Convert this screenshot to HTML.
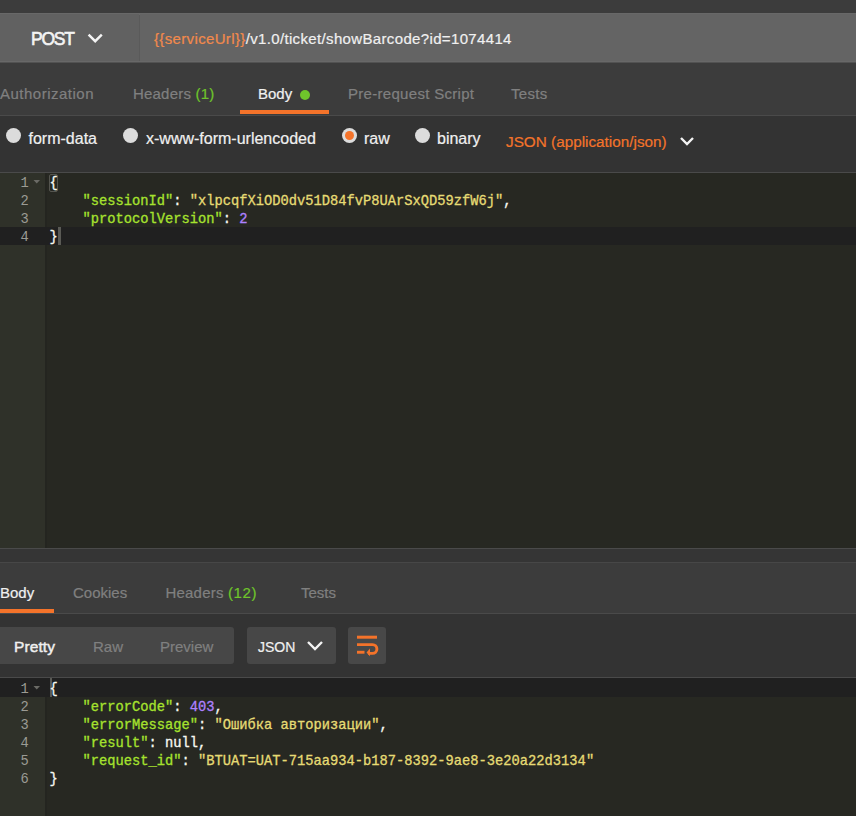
<!DOCTYPE html>
<html><head><meta charset="utf-8">
<style>
html,body{margin:0;padding:0}
body{width:856px;height:816px;overflow:hidden;background:#333333;position:relative;font-family:"Liberation Sans",sans-serif}
.a{position:absolute;white-space:pre}
.t{position:absolute;white-space:pre;line-height:20px;height:20px;-webkit-text-stroke:0.2px currentColor}
.mono{font-family:"Liberation Mono",monospace;font-size:13.75px;line-height:18px;white-space:pre;position:absolute;-webkit-text-stroke:0.3px currentColor}
.k{color:#a6e22e}.s{color:#e6db74}.n{color:#ae81ff}.p{color:#f8f8f2}
.ln{position:absolute;font-family:"Liberation Mono",monospace;font-size:13.75px;line-height:18px;color:#9b9b94;text-align:right;width:28.7px;left:0}
</style></head><body>
<!-- top strip -->
<div class="a" style="left:0;top:0;width:856px;height:13px;background:#3c3c3c"></div>
<!-- request bar -->
<div class="a" style="left:0;top:13px;width:856px;height:49px;background:#686868"></div>
<div class="a" style="left:0;top:14px;width:139px;height:47px;background:#616161"></div>
<div class="a" style="left:140px;top:14px;width:716px;height:47px;background:#646464"></div>
<div class="a" style="left:139px;top:15px;width:1px;height:46px;background:#5a5a5a"></div>
<div class="a" style="left:0;top:62px;width:856px;height:1px;background:#525252"></div>
<div class="t" style="left:31px;top:28.9px;font-size:17.5px;color:#f4f4f4;letter-spacing:-1.25px;-webkit-text-stroke:0.6px #f4f4f4">POST</div>
<svg class="a" style="left:85px;top:30px" width="20" height="16" viewBox="0 0 20 16"><path d="M3.6 4.6 L10.2 11.2 L16.8 4.6" fill="none" stroke="#f4f4f4" stroke-width="2.4"/></svg>
<div class="t" style="left:154px;top:29.1px;font-size:15px;letter-spacing:0.35px;color:#f0f0f0"><span style="color:#f28a4c">{{serviceUrl}}</span>/v1.0/ticket/showBarcode?id=1074414</div>

<!-- tabs row -->
<div class="a" style="left:0;top:63px;width:856px;height:52px;background:#3c3c3c"></div>
<div class="a" style="left:0;top:115px;width:856px;height:1px;background:#4a4a4a"></div>
<div class="t" style="left:0;top:83.9px;font-size:15px;letter-spacing:0.5px;color:#808080">Authorization</div>
<div class="t" style="left:133px;top:83.9px;font-size:15px;letter-spacing:0.2px;color:#808080">Headers <span style="color:#6fc52b">(1)</span></div>
<div class="t" style="left:258px;top:83.9px;font-size:15px;color:#f0f0f0">Body</div>
<div class="a" style="left:300px;top:89.5px;width:10px;height:10px;border-radius:50%;background:#6fc52b"></div>
<div class="a" style="left:240px;top:110px;width:89px;height:4px;background:#f4732a"></div>
<div class="t" style="left:348px;top:83.9px;font-size:15px;letter-spacing:0.3px;color:#808080">Pre-request Script</div>
<div class="t" style="left:511px;top:83.9px;font-size:15px;letter-spacing:0.3px;color:#808080">Tests</div>

<!-- radio row -->
<div class="a" style="left:6px;top:128px;width:15px;height:15px;border-radius:50%;background:#dcdcdc"></div>
<div class="t" style="left:28.5px;top:129.3px;font-size:16px;color:#f0f0f0">form-data</div>
<div class="a" style="left:123px;top:128px;width:15px;height:15px;border-radius:50%;background:#dcdcdc"></div>
<div class="t" style="left:146px;top:129.3px;font-size:16px;color:#f0f0f0">x-www-form-urlencoded</div>
<div class="a" style="left:342px;top:128px;width:15px;height:15px;border-radius:50%;background:#dcdcdc"></div>
<div class="a" style="left:345px;top:131px;width:9px;height:9px;border-radius:50%;background:#f4732a"></div>
<div class="t" style="left:364px;top:129.3px;font-size:16px;color:#f0f0f0">raw</div>
<div class="a" style="left:415px;top:128px;width:15px;height:15px;border-radius:50%;background:#dcdcdc"></div>
<div class="t" style="left:437px;top:129.3px;font-size:16px;color:#f0f0f0">binary</div>
<div class="t" style="left:506px;top:131.6px;font-size:15.3px;color:#f4732a">JSON (application/json)</div>
<svg class="a" style="left:677px;top:133px" width="20" height="16" viewBox="0 0 20 16"><path d="M4 5 L10 11 L16 5" fill="none" stroke="#f4f4f4" stroke-width="2.4"/></svg>

<!-- request editor -->
<div class="a" style="left:0;top:172px;width:856px;height:1px;background:#4a4a4a"></div>
<div class="a" style="left:0;top:173px;width:45px;height:375px;background:#2f3129"></div>
<div class="a" style="left:45px;top:173px;width:811px;height:375px;background:#272822"></div>
<div class="a" style="left:45px;top:173px;width:2px;height:375px;background:#242520"></div>
<div class="a" style="left:0;top:227px;width:856px;height:18px;background:#202020"></div>
<div class="ln" style="top:175px">1</div>
<div class="ln" style="top:193px">2</div>
<div class="ln" style="top:211px">3</div>
<div class="ln" style="top:229px">4</div>
<svg class="a" style="left:33px;top:179px" width="8" height="6"><path d="M0.5 1 L7 1 L3.75 4.5 Z" fill="#6b6b66"/></svg>
<div class="a" style="left:49px;top:174px;width:8.5px;height:17.5px;border:1px solid #55554f;border-radius:2px;box-sizing:border-box"></div>
<div class="mono p" style="left:49.5px;top:175px">{</div>
<div class="mono p" style="left:49.5px;top:193px">    <span class="k">"sessionId"</span>: <span class="s">"xlpcqfXiOD0dv51D84fvP8UArSxQD59zfW6j"</span>,</div>
<div class="mono p" style="left:49.5px;top:211px">    <span class="k">"protocolVersion"</span>: <span class="n">2</span></div>
<div class="mono p" style="left:49.5px;top:229px">}</div>
<div class="a" style="left:58px;top:227px;width:3px;height:18px;background:#5a5a55"></div>

<!-- section gap -->
<div class="a" style="left:0;top:548px;width:856px;height:1px;background:#4a4a4a"></div>
<div class="a" style="left:0;top:549px;width:856px;height:13px;background:#353535"></div>
<div class="a" style="left:0;top:562px;width:856px;height:1px;background:#474747"></div>

<!-- response tabs -->
<div class="a" style="left:0;top:563px;width:856px;height:50px;background:#3c3c3c"></div>
<div class="a" style="left:0;top:613px;width:856px;height:1px;background:#4a4a4a"></div>
<div class="t" style="left:0;top:582.8px;font-size:15px;color:#f0f0f0">Body</div>
<div class="a" style="left:0;top:609px;width:54px;height:4px;background:#f4732a"></div>
<div class="t" style="left:73px;top:582.8px;font-size:15px;color:#808080">Cookies</div>
<div class="t" style="left:165.5px;top:582.8px;font-size:15px;color:#808080;letter-spacing:0.2px">Headers <span style="color:#6fc52b;letter-spacing:0.6px">(12)</span></div>
<div class="t" style="left:301px;top:582.8px;font-size:15px;color:#808080">Tests</div>

<!-- response toolbar -->
<div class="a" style="left:0;top:627px;width:234px;height:37px;background:#474747;border-radius:0 3px 3px 0"></div>
<div class="t" style="left:14px;top:636.5px;font-size:15.5px;color:#f0f0f0;-webkit-text-stroke:0.45px #f0f0f0;letter-spacing:0.1px">Pretty</div>
<div class="t" style="left:93px;top:636.5px;font-size:15px;color:#808080">Raw</div>
<div class="t" style="left:160px;top:636.5px;font-size:15px;color:#808080">Preview</div>
<div class="a" style="left:247px;top:627px;width:89px;height:37px;background:#474747;border-radius:3px"></div>
<div class="t" style="left:258px;top:636.7px;font-size:14px;color:#f0f0f0">JSON</div>
<svg class="a" style="left:305px;top:637px" width="20" height="16" viewBox="0 0 20 16"><path d="M3 5 L10 12 L17 5" fill="none" stroke="#f4f4f4" stroke-width="2.4"/></svg>
<div class="a" style="left:348px;top:627px;width:38px;height:37px;background:#484848;border-radius:3px"></div>
<svg class="a" style="left:348px;top:627px" width="38" height="37" viewBox="348 627 38 37">
<rect x="357" y="635.7" width="20" height="3" fill="#f4732a"/>
<path d="M357 644.6 H372.5 A4.4 4.4 0 0 1 372.5 653.4 H368" fill="none" stroke="#f4732a" stroke-width="2.9"/>
<path d="M366.5 652.4 L370 648.6 L370 656.2 Z" fill="#f4732a"/>
<rect x="357" y="650.8" width="7.5" height="2.9" fill="#f4732a"/>
</svg>

<!-- response editor -->
<div class="a" style="left:0;top:677px;width:856px;height:1px;background:#4a4a4a"></div>
<div class="a" style="left:0;top:678px;width:45px;height:138px;background:#2f3129"></div>
<div class="a" style="left:45px;top:678px;width:811px;height:138px;background:#272822"></div>
<div class="a" style="left:45px;top:678px;width:2px;height:138px;background:#242520"></div>
<div class="a" style="left:0;top:678px;width:856px;height:19px;background:#202020"></div>
<div class="ln" style="top:681px">1</div>
<div class="ln" style="top:699px">2</div>
<div class="ln" style="top:717px">3</div>
<div class="ln" style="top:735px">4</div>
<div class="ln" style="top:753px">5</div>
<div class="ln" style="top:771px">6</div>
<div class="a" style="left:50px;top:678px;width:2px;height:19px;background:#5a5a55"></div>
<svg class="a" style="left:33px;top:685px" width="8" height="6"><path d="M0.5 1 L7 1 L3.75 4.5 Z" fill="#6b6b66"/></svg>

<div class="mono p" style="left:49.5px;top:681px">{</div>
<div class="mono p" style="left:49.5px;top:699px">    <span class="k">"errorCode"</span>: <span class="n">403</span>,</div>
<div class="mono p" style="left:49.5px;top:717px">    <span class="k">"errorMessage"</span>: <span class="s">"Ошибка авторизации"</span>,</div>
<div class="mono p" style="left:49.5px;top:735px">    <span class="k">"result"</span>: null,</div>
<div class="mono p" style="left:49.5px;top:753px">    <span class="k">"request_id"</span>: <span class="s">"BTUAT=UAT-715aa934-b187-8392-9ae8-3e20a22d3134"</span></div>
<div class="mono p" style="left:49.5px;top:771px">}</div>
</body></html>
